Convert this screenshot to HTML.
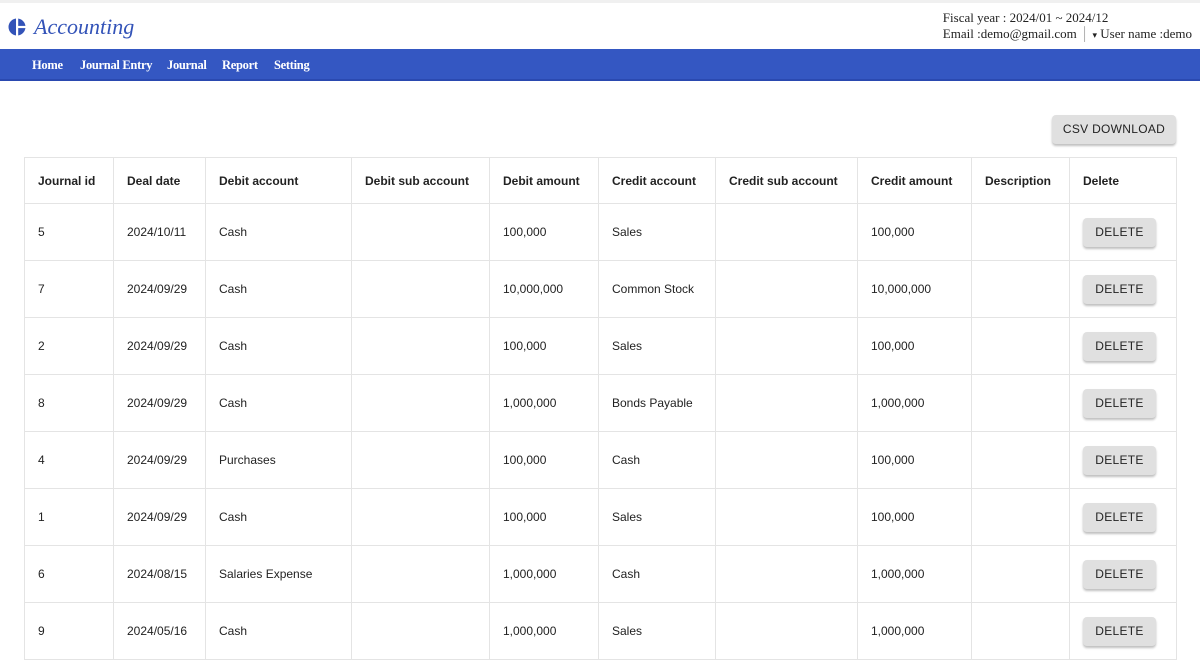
<!DOCTYPE html>
<html><head><style>
*{box-sizing:border-box;margin:0;padding:0}
body{width:1200px;height:655px;overflow:hidden;background:#fff;font-family:"Liberation Sans",Arial,sans-serif;border-top:3px solid #f0f0f0;position:relative}
.hdr{height:46px;position:relative}
.logo{position:absolute;left:8px;top:11px;display:flex;align-items:center}
.logo span{font-family:"Liberation Serif",serif;font-style:italic;color:#3353b8;font-size:22px;margin-left:8px}
.info{position:absolute;right:8px;top:7px;font-family:"Liberation Serif",serif;font-size:13px;color:#222;line-height:15.5px}
.nav{position:absolute;top:46px;left:0;width:1200px;height:32px;background:#3457c2;border-bottom:2px solid #2a49b0}
.nav a{position:absolute;top:9px;color:#fff;font-family:"Liberation Serif",serif;font-weight:bold;font-size:12.5px;letter-spacing:-0.3px}
.btn{position:absolute;background:#e0e0e0;border-radius:4px;box-shadow:0 2px 2px rgba(0,0,0,.25);font-size:12px;color:#222;text-align:center;letter-spacing:.3px}
table{position:absolute;left:24px;top:154px;border-collapse:collapse;font-size:12px;color:#222}
td,th{border:1px solid #e4e4e4;text-align:left;padding-left:13px;height:57px}
th{height:46px;font-weight:bold}
</style></head><body>
<div class="hdr">
<div class="logo"><svg width="18" height="18" viewBox="0 0 18 18"><circle cx="9" cy="9" r="8.5" fill="#3353b8"/><rect x="8" y="0" width="2.2" height="18" fill="#fff"/><rect x="9" y="7.9" width="9" height="2.2" fill="#fff"/></svg><span>Accounting</span></div>
<div class="info">Fiscal year : 2024/01 ~ 2024/12<br>Email :demo@gmail.com <span style="color:#aaa">│</span> <span style="font-size:9px">▾</span> User name :demo</div>
</div>
<div class="nav"><a style="left:32px">Home</a><a style="left:80px">Journal Entry</a><a style="left:167px">Journal</a><a style="left:222px">Report</a><a style="left:274px">Setting</a></div>
<div class="btn" style="left:1052px;top:112px;width:124px;height:29px;line-height:29px">CSV DOWNLOAD</div>
<table>
<tr><th style="width:89px">Journal id</th><th style="width:92px">Deal date</th><th style="width:146px">Debit account</th><th style="width:138px">Debit sub account</th><th style="width:109px">Debit amount</th><th style="width:117px">Credit account</th><th style="width:142px">Credit sub account</th><th style="width:114px">Credit amount</th><th style="width:98px">Description</th><th style="width:107px">Delete</th></tr>
<tr><td>5</td><td>2024/10/11</td><td>Cash</td><td></td><td>100,000</td><td>Sales</td><td></td><td>100,000</td><td></td><td><div class="btn" style="position:static;width:73px;height:29px;line-height:29px">DELETE</div></td></tr>
<tr><td>7</td><td>2024/09/29</td><td>Cash</td><td></td><td>10,000,000</td><td>Common Stock</td><td></td><td>10,000,000</td><td></td><td><div class="btn" style="position:static;width:73px;height:29px;line-height:29px">DELETE</div></td></tr>
<tr><td>2</td><td>2024/09/29</td><td>Cash</td><td></td><td>100,000</td><td>Sales</td><td></td><td>100,000</td><td></td><td><div class="btn" style="position:static;width:73px;height:29px;line-height:29px">DELETE</div></td></tr>
<tr><td>8</td><td>2024/09/29</td><td>Cash</td><td></td><td>1,000,000</td><td>Bonds Payable</td><td></td><td>1,000,000</td><td></td><td><div class="btn" style="position:static;width:73px;height:29px;line-height:29px">DELETE</div></td></tr>
<tr><td>4</td><td>2024/09/29</td><td>Purchases</td><td></td><td>100,000</td><td>Cash</td><td></td><td>100,000</td><td></td><td><div class="btn" style="position:static;width:73px;height:29px;line-height:29px">DELETE</div></td></tr>
<tr><td>1</td><td>2024/09/29</td><td>Cash</td><td></td><td>100,000</td><td>Sales</td><td></td><td>100,000</td><td></td><td><div class="btn" style="position:static;width:73px;height:29px;line-height:29px">DELETE</div></td></tr>
<tr><td>6</td><td>2024/08/15</td><td>Salaries Expense</td><td></td><td>1,000,000</td><td>Cash</td><td></td><td>1,000,000</td><td></td><td><div class="btn" style="position:static;width:73px;height:29px;line-height:29px">DELETE</div></td></tr>
<tr><td>9</td><td>2024/05/16</td><td>Cash</td><td></td><td>1,000,000</td><td>Sales</td><td></td><td>1,000,000</td><td></td><td><div class="btn" style="position:static;width:73px;height:29px;line-height:29px">DELETE</div></td></tr>
</table>
</body></html>
